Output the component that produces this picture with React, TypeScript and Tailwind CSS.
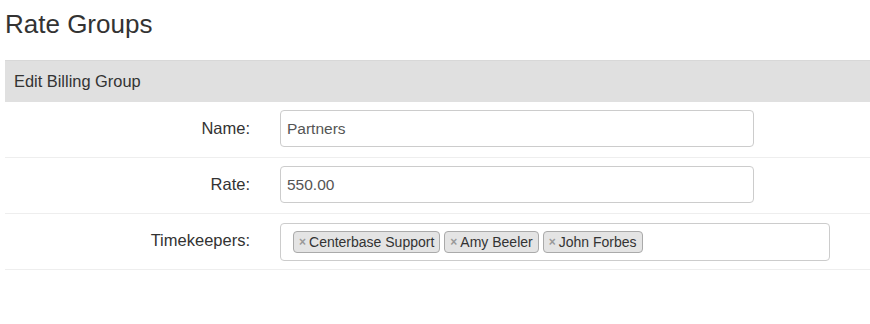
// ── Tag chip inside the timekeeper picker ────────────────────────────────────

const Tag = ({ label }: { label: string }) => (
  <span className="flex h-[22px] items-center rounded-[4px] border border-[#aaaaaa] bg-[#e4e4e4] pl-[5px] pr-[5px] text-[14px] leading-none text-[#333333]">
    <span className="mr-[3px] text-[12px] font-bold leading-none text-[#999999]">×</span>
    {label}
  </span>
)

const Row = ({ label, children }: { label: string; children: React.ReactNode }) => (
  <div className="flex h-[56px] items-start border-b border-[#eeeeee] pt-[8px]">
    <label className="flex h-[37px] w-[245px] items-center justify-end text-[16.5px] text-[#333333]">
      {label}
    </label>
    <div className="ml-[30px]">{children}</div>
  </div>
)

export default function App() {
  return (
    <div className="min-h-screen bg-white pl-[5px] font-['Liberation_Sans',Arial,sans-serif]">
      <h1 className="pt-[10px] text-[26px] leading-[28px] text-[#333333]">Rate Groups</h1>

      <div className="mt-[22px] flex h-[42px] items-center border-t border-[#d8d8d8] bg-[#e0e0e0] px-[9px] text-[16.4px] text-[#333333]">
        Edit Billing Group
      </div>

      <Row label="Name:">
        <input
          readOnly
          value="Partners"
          className="h-[37px] w-[474px] rounded-[4px] border border-[#cccccc] px-[6px] text-[15.5px] text-[#555555] outline-none"
        />
      </Row>

      <Row label="Rate:">
        <input
          readOnly
          value="550.00"
          className="h-[37px] w-[474px] rounded-[4px] border border-[#cccccc] px-[6px] text-[15.5px] text-[#555555] outline-none"
        />
      </Row>

      <Row label="Timekeepers:">
        <div className="mt-[1px] flex h-[38px] w-[550px] items-center gap-[4px] rounded-[4px] border border-[#cccccc] pl-[12px]">
          <Tag label="Centerbase Support" />
          <Tag label="Amy Beeler" />
          <Tag label="John Forbes" />
        </div>
      </Row>
    </div>
  )
}
